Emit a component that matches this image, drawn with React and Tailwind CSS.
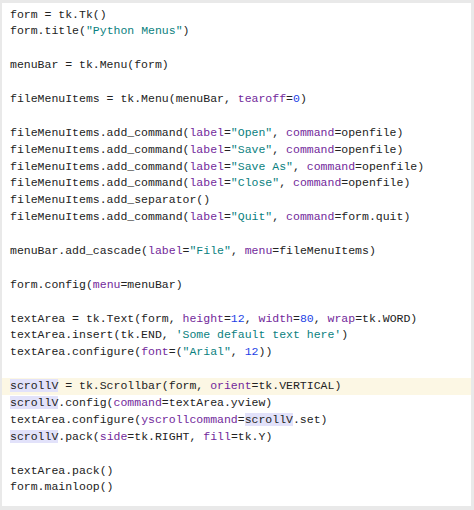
import React from "react";

const C = {
  n: "text-[#222222]",
  s: "text-[#0a7f80]",
  k: "text-[#72289b]",
  d: "text-[#1c3fe6]",
  h: "text-[#222222] bg-[#e2e2fa]",
};

const L = (...parts) => parts;

const lines = [
  L(["form = tk.Tk()", "n"]),
  L(["form.title(", "n"], ['"Python Menus"', "s"], [")", "n"]),
  L(),
  L(["menuBar = tk.Menu(form)", "n"]),
  L(),
  L(["fileMenuItems = tk.Menu(menuBar, ", "n"], ["tearoff", "k"], ["=", "n"], ["0", "d"], [")", "n"]),
  L(),
  L(["fileMenuItems.add_command(", "n"], ["label", "k"], ["=", "n"], ['"Open"', "s"], [", ", "n"], ["command", "k"], ["=openfile)", "n"]),
  L(["fileMenuItems.add_command(", "n"], ["label", "k"], ["=", "n"], ['"Save"', "s"], [", ", "n"], ["command", "k"], ["=openfile)", "n"]),
  L(["fileMenuItems.add_command(", "n"], ["label", "k"], ["=", "n"], ['"Save As"', "s"], [", ", "n"], ["command", "k"], ["=openfile)", "n"]),
  L(["fileMenuItems.add_command(", "n"], ["label", "k"], ["=", "n"], ['"Close"', "s"], [", ", "n"], ["command", "k"], ["=openfile)", "n"]),
  L(["fileMenuItems.add_separator()", "n"]),
  L(["fileMenuItems.add_command(", "n"], ["label", "k"], ["=", "n"], ['"Quit"', "s"], [", ", "n"], ["command", "k"], ["=form.quit)", "n"]),
  L(),
  L(["menuBar.add_cascade(", "n"], ["label", "k"], ["=", "n"], ['"File"', "s"], [", ", "n"], ["menu", "k"], ["=fileMenuItems)", "n"]),
  L(),
  L(["form.config(", "n"], ["menu", "k"], ["=menuBar)", "n"]),
  L(),
  L(["textArea = tk.Text(form, ", "n"], ["height", "k"], ["=", "n"], ["12", "d"], [", ", "n"], ["width", "k"], ["=", "n"], ["80", "d"], [", ", "n"], ["wrap", "k"], ["=tk.WORD)", "n"]),
  L(["textArea.insert(tk.END, ", "n"], ["'Some default text here'", "s"], [")", "n"]),
  L(["textArea.configure(", "n"], ["font", "k"], ["=(", "n"], ['"Arial"', "s"], [", ", "n"], ["12", "d"], ["))", "n"]),
  L(),
  L(["scrollV", "h"], [" = tk.Scrollbar(form, ", "n"], ["orient", "k"], ["=tk.VERTICAL)", "n"]),
  L(["scrollV", "h"], [".config(", "n"], ["command", "k"], ["=textArea.yview)", "n"]),
  L(["textArea.configure(", "n"], ["yscrollcommand", "k"], ["=", "n"], ["scrollV", "h"], [".set)", "n"]),
  L(["scrollV", "h"], [".pack(", "n"], ["side", "k"], ["=tk.RIGHT, ", "n"], ["fill", "k"], ["=tk.Y)", "n"]),
  L(),
  L(["textArea.pack()", "n"]),
  L(["form.mainloop()", "n"]),
];

export default function App() {
  return (
    <div className="w-[474px] h-[510px] bg-[#e9e9e9] pl-[2px] pt-[3px] pr-[3px] pb-[4px] overflow-hidden">
      <div
        className="h-full bg-white pt-[3.5px] text-[11.5px] leading-[16.9px] whitespace-pre"
        style={{ fontFamily: '"Liberation Mono", "Courier New", monospace' }}
      >
        {lines.map((parts, i) => (
          <div
            key={i}
            className={`h-[16.9px] pl-[8px] ${i === 22 ? "bg-[#fcf7e4]" : ""}`}
          >
            {parts.length === 0 ? "\u00a0" : parts.map(([t, c], j) => (
              <span key={j} className={C[c]}>{t}</span>
            ))}
          </div>
        ))}
      </div>
    </div>
  );
}
